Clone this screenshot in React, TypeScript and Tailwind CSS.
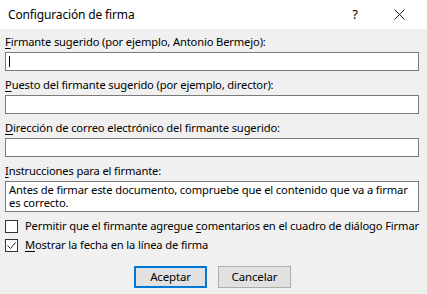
import React from 'react';

const font = { fontFamily: '"Noto Sans", "Segoe UI", sans-serif', letterSpacing: '-0.15px' };

/** Label with one underlined access key */
function AccessLabel({ before = '', keyChar, after }: { before?: string; keyChar: string; after: string }) {
	return (
		<span className="whitespace-nowrap">
			{before}
			<span className="underline underline-offset-2">{keyChar}</span>
			{after}
		</span>
	);
}

function Field({ label, cursor = false }: { label: React.ReactNode; cursor?: boolean }) {
	return (
		<div>
			<div className="h-[16px] leading-[16px]">{label}</div>
			<div className="mt-[2px] h-[19px] border border-[#7a7a7a] bg-white relative">
				{cursor && <span className="absolute left-[3px] top-[3px] w-px h-[11px] bg-black" />}
			</div>
		</div>
	);
}

export default function App() {
	return (
		<div className="w-[428px] h-[294px] bg-[#f0f0f0] text-[11.2px] text-black flex flex-col border-r border-[#d4d4d4]" style={font}>
			{/* Title bar */}
			<div className="h-[29px] bg-white flex items-center shrink-0">
				<div className="pl-[8px] flex-1 text-[12px]">Configuración de firma</div>
				<div className="w-[20px] text-center text-[13px] mr-[28px]">?</div>
				<div className="w-[12px] flex justify-center mr-[22px]">
					<svg width="11" height="11" viewBox="0 0 11 11" fill="none" stroke="#222" strokeWidth="1">
						<path d="M0.5 0.5 L10.5 10.5 M10.5 0.5 L0.5 10.5" />
					</svg>
				</div>
			</div>

			{/* Body */}
			<div className="pl-[5px] pr-[8px] pt-[5px] flex flex-col gap-[6px]">
				<Field cursor label={<AccessLabel keyChar="F" after="irmante sugerido (por ejemplo, Antonio Bermejo):" />} />
				<Field label={<AccessLabel keyChar="P" after="uesto del firmante sugerido (por ejemplo, director):" />} />
				<Field label={<AccessLabel keyChar="D" after="irección de correo electrónico del firmante sugerido:" />} />
				<div>
					<div className="h-[16px] leading-[16px]">
						<AccessLabel keyChar="I" after="nstrucciones para el firmante:" />
					</div>
					<div className="mt-[2px] h-[31px] border border-[#7a7a7a] bg-white px-[3px] leading-[13px] pt-[1px]">
						Antes de firmar este documento, compruebe que el contenido que va a firmar es correcto.
					</div>
				</div>
			</div>

			{/* Checkboxes */}
			<div className="pl-[5px] mt-[8px] flex flex-col gap-[6px]">
				<div className="flex items-center h-[13px]">
					<span className="w-[13px] h-[13px] border border-[#333] bg-white shrink-0" />
					<span className="ml-[7px]">
						<AccessLabel before="Permitir que el firmante agregue " keyChar="c" after="omentarios en el cuadro de diálogo Firmar" />
					</span>
				</div>
				<div className="flex items-center h-[13px]">
					<span className="w-[13px] h-[13px] border border-[#333] bg-white shrink-0 flex items-center justify-center">
						<svg width="11" height="11" viewBox="0 0 11 11" fill="none" stroke="#222" strokeWidth="1">
							<path d="M1.5 5.5 L4.5 8.5 L9.5 2.5" />
						</svg>
					</span>
					<span className="ml-[7px]">
						<AccessLabel keyChar="M" after="ostrar la fecha en la línea de firma" />
					</span>
				</div>
			</div>

			{/* Buttons */}
			<div className="flex pl-[134px] gap-[11px] mt-[14px]">
				<button className="w-[73px] h-[22px] border-2 border-[#0078d7] bg-[#e1e1e1] text-[11.5px]" style={font}>
					Aceptar
				</button>
				<button className="w-[73px] h-[22px] border border-[#adadad] bg-[#e1e1e1] text-[11.5px]" style={font}>
					Cancelar
				</button>
			</div>
		</div>
	);
}
